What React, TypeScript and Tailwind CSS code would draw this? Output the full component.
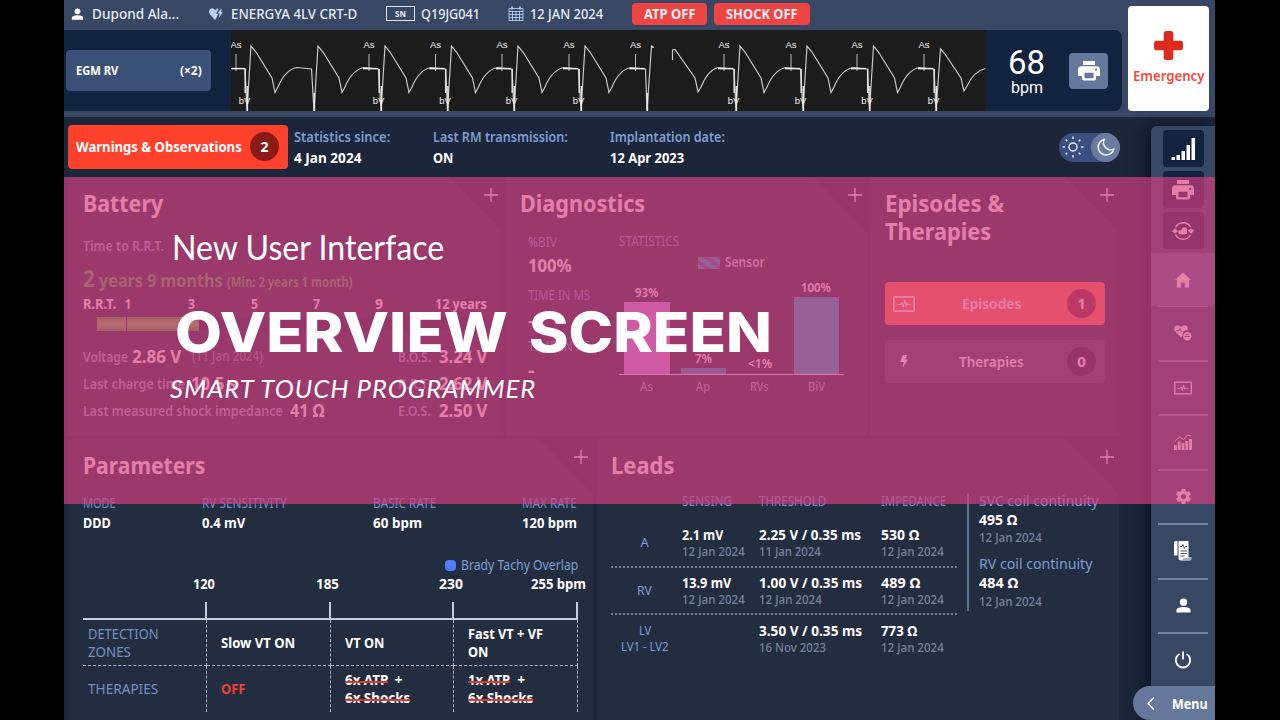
import { useLayoutEffect, useRef, useState, type ReactNode } from 'react';

/** One line of text, condensed or widened to take up exactly `w` pixels. */
function T({ w, c = '', children }: { w: number; c?: string; children: ReactNode }) {
  const ref = useRef<HTMLSpanElement>(null);
  const [scale, setScale] = useState(1);
  useLayoutEffect(() => {
    if (ref.current) setScale(w / ref.current.offsetWidth);
  }, [w, children]);
  return (
    <span className={`flex shrink-0 leading-none ${c}`} style={{ width: w }}>
      <span ref={ref} className="inline-block shrink-0 origin-left whitespace-nowrap" style={{ transform: `scaleX(${scale})` }}>
        {children}
      </span>
    </span>
  );
}

function PersonIcon({ c }: { c: string }) {
  return (
    <svg viewBox="0 0 16 16" className={c} fill="currentColor">
      <circle cx="8" cy="4.4" r="3.9" />
      <path d="M0.5 15.5v-2.2C0.5 10.6 4 9.6 8 9.6s7.5 1 7.5 3.7v2.2z" />
    </svg>
  );
}

function PrinterIcon({ c }: { c: string }) {
  return (
    <svg viewBox="0 0 22 20" className={c} fill="currentColor">
      <path d="M5 0h12v4H5z" />
      <path fillRule="evenodd" d="M3.5 5.2h15A3.5 3.5 0 0 1 22 8.700V15h-4v2.500A2 2 0 0 1 16 19.500H6A2 2 0 0 1 4 17.500V15H0V8.700A3.500 3.500 0 0 1 3.500 5.200zM6.500 11.800v5.400h9v-5.400zM18 7.600a1.100 1.100 0 1 0 0.010 0z" />
    </svg>
  );
}

function MonitorIcon({ c }: { c: string }) {
  return (
    <svg viewBox="0 0 22 16" className={c} fill="none" stroke="currentColor" strokeWidth="1.700">
      <rect x="0.850" y="0.850" width="20.300" height="14.300" rx="1" />
      <path d="M4.500 8.500h3l1.300-1.800 1.400 4.500 1.500-7 1.300 5.500 1-2.200 1 1h2.500" strokeWidth="1.200" />
    </svg>
  );
}

const beats = [247, 314, 381, 447.5, 514, 581];
const lateBeats = [736, 803, 869.5];
const wave = (x: number) =>
  `L${x} 111L${x + 4} 46L${x + 9} 52L${x + 25} 78L${x + 28} 92.500L${x + 31} 87Q${x + 38} 70 ${x + 50} 67.500L${x + 64.5} 69`;
const trace =
  'M231 68.500H245' + beats.map(wave).join('') + 'L647 111L651.500 46L654 47.500' +
  'M672.500 60V50L675 49.500L695 78L698 92L701 87Q708 70 718 67.500L734 69' + lateBeats.map(wave).join('') +
  'L936 111L940.500 49L945 54L961 78L964 91L967 86Q974 71 985.500 68.500';
const senses = [236, 369, 435.5, 502, 569, 635.5, 724, 791, 857, 924];
const paces = [247, 381, 447.5, 514, 581, 736, 803, 869.5, 936];

function Egm() {
  return (
    <svg viewBox="231 30 755 81" className="h-[81px] w-[755px] shrink-0 bg-[#1c1c1c]">
      <path d={trace} fill="none" stroke="#c9c9c9" strokeWidth="1.2" />
      <path d="M314.300 93V111M647.300 93V111" stroke="#e4e4e4" strokeWidth="1.800" />
      {senses.map((x) => (
        <g key={x}>
          <path d={`M${x} 54V71`} stroke="#bbb" strokeWidth="1" />
          <path d={`M${x - 6} 68.600H${x + 9}`} stroke="#eee" strokeWidth="1.500" />
          <text x={x} y="47.500" textAnchor="middle" fill="#f2f2f2" className="font-['Liberation_Sans'] text-[9.5px]">As</text>
        </g>
      ))}
      {paces.map((x) => (
        <g key={x}>
          <path d={`M${x - 1.8} 69V93M${x + 0.4} 86V111`} stroke="#e4e4e4" strokeWidth="1.500" />
          <text x={x - 2.5} y="104" textAnchor="middle" fill="#f2f2f2" className="font-['Liberation_Sans'] text-[9.5px]">bV</text>
        </g>
      ))}
    </svg>
  );
}

function Header() {
  return (
    <header className="flex h-[117px] shrink-0 bg-[#384764]">
      <div className="w-[1058px]">
        <div className="flex h-[30px] items-center pb-[3px] text-[15px] font-medium text-[#e6ebf7]">
          <PersonIcon c="ml-[7px] h-[12px] w-[13px] text-white" />
          <T w={87} c="ml-2">Dupond Ala...</T>
          <svg viewBox="0 0 14 12" className="ml-[30px] h-[12px] w-[14px]" fill="#b9cff5">
            <path d="M6 12L1 6.500C-1.500 3.500 1 0 3.700 0.400 5 0.500 6 1.500 6.300 2.200 7 1 8.300 0.300 9.600 0.500L7.200 5.500l2 0.500L7 11z" />
            <path d="M11 1.500L8.800 5.200l2 0.500-1.300 4.500 4.300-5.700-2-0.500 1.200-2.400z" />
          </svg>
          <T w={126} c="ml-2">ENERGYA 4LV CRT-D</T>
          <span className="ml-[29px] flex h-[15px] w-[29px] items-center justify-center border border-[#dce5f7] text-[8px] font-bold leading-none">SN</span>
          <T w={59} c="ml-[6px]">Q19JG041</T>
          <svg viewBox="0 0 16 16" className="ml-[28px] h-4 w-4" fill="none" stroke="#b9cff5">
            <path d="M1 2.500h14v12H1zM1 5.500h14M1 8.500h14M1 11.500h14M4.500 5.500v9M8 5.500v9M11.500 5.500v9" strokeWidth="0.9" />
            <path d="M4 0.500v3M12 0.500v3" strokeWidth="1.600" />
          </svg>
          <T w={73} c="ml-[6px]">12 JAN 2024</T>
          <span className="ml-[29px] flex h-[22px] w-[75px] items-center justify-center rounded bg-[#ef4542] text-[14.5px] font-bold"><T w={52}>ATP OFF</T></span>
          <span className="ml-[7px] flex h-[22px] w-[96px] items-center justify-center rounded bg-[#ef4542] text-[14.5px] font-bold"><T w={72}>SHOCK OFF</T></span>
        </div>
        <div className="flex h-[81px] items-center rounded-r-lg bg-[#12233f]">
          <div className="ml-[2px] mr-[20px] flex h-[41px] w-[145px] items-center justify-between rounded bg-[#3b5078] pl-[10px] pr-[9px] text-[13px] font-bold text-white">
            <T w={42}>EGM RV</T>
            <T w={22}>(×2)</T>
          </div>
          <Egm />
          <div className="ml-[22px] flex w-[37px] flex-col items-center text-white">
            <span className="flex h-[34px] items-center font-['Roboto'] text-[33px] leading-none"><T w={37}>68</T></span>
            <span className="flex h-[16px] items-center font-['Roboto'] text-[17px] leading-none"><T w={32}>bpm</T></span>
          </div>
          <div className="ml-[24px] flex h-[36px] w-[39px] items-center justify-center rounded bg-[#65779a] text-white">
            <PrinterIcon c="h-[20px] w-[22px]" />
          </div>
        </div>
      </div>
      <div className="ml-[6px] mt-[6px] flex h-[105px] w-[81px] flex-col items-center rounded bg-white">
        <svg viewBox="0 0 29 29" className="mt-[25px] h-[29px] w-[29px]" fill="#dc2a1e">
          <rect x="9.700" width="9.600" height="29" rx="2.500" />
          <rect y="9.700" width="29" height="9.600" rx="2.500" />
        </svg>
        <T w={71} c="mt-[8px] text-[15px] font-semibold text-[#f4473a]">Emergency</T>
      </div>
    </header>
  );
}

function Fact({ label, lw, value, vw, c }: { label: string; lw: number; value: string; vw: number; c: string }) {
  return (
    <div className={`flex flex-col gap-[7px] text-[14px] ${c}`}>
      <T w={lw} c="font-semibold text-[#7f9dd4]">{label}</T>
      <T w={vw} c="font-bold text-white">{value}</T>
    </div>
  );
}

function StatusBar() {
  return (
    <div className="flex h-[60px] shrink-0 items-center">
      <div className="ml-[4px] flex h-[44px] w-[220px] items-center justify-between rounded bg-[#ff402a] pb-px pl-[8px] pr-[9px] text-white">
        <T w={166} c="text-[15px] font-bold">Warnings & Observations</T>
        <span className="flex h-[29px] w-[29px] items-center justify-center rounded-full bg-[#8a1a15] text-[14px] font-bold">2</span>
      </div>
      <Fact label="Statistics since:" lw={96} value="4 Jan 2024" vw={67} c="ml-[6px] w-[139px]" />
      <Fact label="Last RM transmission:" lw={135} value="ON" vw={20} c="w-[177px]" />
      <Fact label="Implantation date:" lw={115} value="12 Apr 2023" vw={74} c="w-[449px]" />
      <div className="flex h-[29px] w-[61px] items-center justify-between rounded-full bg-[#3a4f80]">
        <svg viewBox="0 0 22 22" className="ml-[3px] h-[22px] w-[22px]" fill="none" stroke="#dfe7f7" strokeWidth="1.500">
          <circle cx="11" cy="11" r="4" />
          <path d="M11 0.500v2.500M11 19v2.500M0.500 11H3M19 11h2.500M3.600 3.600l1.700 1.700M16.700 16.700l1.700 1.700M3.600 18.400l1.700-1.700M16.700 5.300l1.700-1.700" />
        </svg>
        <div className="flex h-[29px] w-[29px] items-center justify-center rounded-full bg-[#6a7b9d]">
          <svg viewBox="0 0 18 18" className="h-[18px] w-[18px]" fill="none" stroke="#eef2fb" strokeWidth="1.500" strokeLinejoin="round">
            <path d="M7.500 1.200A8 8 0 1 0 17 10.800 7 7 0 0 1 7.500 1.200z" />
          </svg>
        </div>
      </div>
    </div>
  );
}

function Card({ c, children }: { c: string; children: ReactNode }) {
  return (
    <section className={`relative shrink-0 bg-[#232d40] ${c}`}>
      <div className="absolute right-0 top-0 h-[55px] w-[54px] bg-[#1b2439] [clip-path:polygon(0_0,100%_0,100%_100%)]" />
      <svg viewBox="0 0 14 14" className="absolute right-[5.500px] top-[10.500px] h-[14px] w-[14px]" stroke="#fff" strokeWidth="1.300">
        <path d="M7 0v14M0 7h14" />
      </svg>
      {children}
    </section>
  );
}

const title = 'text-[23px] font-bold text-white';
const label = 'text-[#7891c0]';
const batteryLabel = 'text-[14px] font-semibold text-[#949fc0]';

function Battery() {
  const rows = [
    { name: 'Voltage', nw: 45, v: '2.86 V', vw: 49, date: '(11 Jan 2024)', e: 'B.O.S.', x: '3.24 V', gap: 'ml-1' },
    { name: 'Last charge time', nw: 102, v: '10.5 s', vw: 46, date: '', e: 'R.R.T.', x: '2.62 V', gap: 'ml-[6px]' },
    { name: 'Last measured shock impedance', nw: 200, v: '41 Ω', vw: 35, date: '', e: 'E.O.S.', x: '2.50 V', gap: 'ml-[7px]' },
  ];
  return (
    <Card c="h-[259px] w-[435px] pl-[15px] pr-[16px]">
      <div className="flex h-[53px] items-center"><T w={80} c={title}>Battery</T></div>
      <div className="flex h-[32px] items-center"><T w={81} c={batteryLabel}>Time to R.R.T.</T></div>
      <div className="flex h-[33px] items-baseline pt-[4px] font-bold text-[#4fae4a]">
        <T w={12} c="text-[24px]">2</T>
        <T w={124} c="ml-1 text-[18px]">years 9 months</T>
        <T w={126} c="ml-1 text-[13.5px]">(Min: 2 years 1 month)</T>
      </div>
      <div className="flex h-[18px] items-center text-[14px] font-bold text-white">
        <T w={33}>R.R.T.</T><T w={6} c="ml-[9px]">1</T><T w={7} c="ml-[57px]">3</T><T w={7} c="ml-[56px]">5</T><T w={7} c="ml-[55px]">7</T><T w={8} c="ml-[55px]">9</T><T w={52} c="ml-[52px]">12 years</T>
      </div>
      <div className="ml-[14px] mt-[4px] flex h-[14px] w-[390px] bg-[#1b2439]">
        <div className="w-[30px] border-r border-[#1b2439] bg-gradient-to-b from-[#3fa03c] via-[#7ccb50] to-[#3fa03c]" />
        <div className="w-[72px] bg-gradient-to-b from-[#3fa03c] via-[#7ccb50] to-[#3fa03c]" />
      </div>
      <div className="mt-[12px]">
        {rows.map((r) => (
          <div key={r.name} className="flex h-[27px] items-center">
            <T w={r.nw} c={batteryLabel}>{r.name}</T>
            <T w={r.vw} c={`text-[17px] font-bold text-white ${r.gap}`}>{r.v}</T>
            {r.date && <T w={71} c="ml-[11px] text-[13.5px] font-medium text-[#76849c]">{r.date}</T>}
            <T w={33} c={`ml-auto ${batteryLabel}`}>{r.e}</T>
            <T w={48} c="ml-[8px] text-[17px] font-bold text-white">{r.x}</T>
          </div>
        ))}
      </div>
    </Card>
  );
}

function Diagnostics() {
  const bars = [
    { name: 'As', nw: 13, h: 72, value: '93%', vw: 23, fill: 'bg-[#c691ec]', lift: 'mb-[3px]' },
    { name: 'Ap', nw: 14, h: 6, value: '7%', vw: 17, fill: 'bg-[#2095b0]', lift: 'mb-[3px]' },
    { name: 'RVs', nw: 19, h: 0, value: '<1%', vw: 24, fill: 'bg-[#2095b0]', lift: 'mb-[4px]' },
    { name: 'BiV', nw: 17, h: 77, value: '100%', vw: 30, fill: 'bg-[#1aa6bc]', lift: 'mb-[3px]' },
  ];
  return (
    <Card c="h-[259px] w-[361px] pl-[14px]">
      <div className="flex h-[53px] items-center"><T w={125} c={title}>Diagnostics</T></div>
      <div className="flex pl-[8px]">
        <div className="w-[91px] text-[14px]">
          <div className="flex h-[24px] items-center"><T w={29} c={label}>%BIV</T></div>
          <div className="flex h-[22px] items-center"><T w={44} c="text-[17px] font-bold text-white">100%</T></div>
          <div className="flex h-[37px] items-center"><T w={62} c={label}>TIME IN MS</T></div>
          <div className="flex h-[16px] items-center"><T w={6} c="font-bold text-white">-</T></div>
          <div className="flex h-[34px] items-center"><T w={62} c={label}>TIME IN AF</T></div>
          <div className="flex h-[14px] items-center"><T w={6} c="text-[17px] font-bold text-white">-</T></div>
        </div>
        <div className="w-[225px]">
          <div className="flex h-[24px] items-center"><T w={60} c={`text-[13.5px] ${label}`}>STATISTICS</T></div>
          <div className="flex h-[17px] items-center">
            <div className="ml-[79px] h-[12px] w-[22px] bg-[repeating-linear-gradient(35deg,#1aa6bc_0,#1aa6bc_4px,#3c6191_4px,#3c6191_8px)]" />
            <T w={40} c="ml-[5px] text-[13.5px] font-semibold text-[#c4cfe4]">Sensor</T>
          </div>
          <div className="flex h-[104px] items-end gap-[11px] border-b border-[#dde3f2] pl-[5px]">
            {bars.map((b) => (
              <div key={b.name} className="flex w-[45.500px] flex-col items-center">
                <T w={b.vw} c={`text-[13px] font-semibold text-white ${b.lift}`}>{b.value}</T>
                <div className={`w-full ${b.fill}`} style={{ height: b.h }} />
              </div>
            ))}
          </div>
          <div className="flex h-[25px] items-center gap-[11px] pl-[5px]">
            {bars.map((b) => (
              <div key={b.name} className="flex w-[45.500px] justify-center"><T w={b.nw} c="text-[12.5px] font-medium text-[#94a5c8]">{b.name}</T></div>
            ))}
          </div>
        </div>
      </div>
    </Card>
  );
}

function Episodes() {
  return (
    <Card c="h-[259px] w-[249px] pl-[15px] pr-[14px]">
      <div className="pt-[12px]">
        <div className="flex h-[28px] items-center"><T w={119} c={title}>Episodes &</T></div>
        <div className="flex h-[28px] items-center"><T w={106} c={title}>Therapies</T></div>
      </div>
      <div className="mt-[37px] flex h-[43px] items-center rounded bg-[#ff7546] pl-[8px] pr-[9px] text-[15px] text-white">
        <MonitorIcon c="h-[16px] w-[22px]" />
        <T w={59} c="ml-[47px] font-semibold">Episodes</T>
        <span className="ml-auto flex h-[29px] w-[29px] items-center justify-center rounded-full bg-[#8a2a2c] font-bold">1</span>
      </div>
      <div className="mt-[15px] flex h-[43px] items-center rounded bg-[#384560] pl-[15px] pr-[9px] text-[15px] text-white">
        <svg viewBox="0 0 8 13" className="h-[13px] w-[8px]" fill="currentColor"><path d="M3 0h4L5.400 4.500H8L2.500 13l1.200-6H0z" /></svg>
        <T w={65} c="ml-[51px] font-semibold">Therapies</T>
        <span className="ml-auto flex h-[29px] w-[29px] items-center justify-center rounded-full bg-[#16203a] font-bold">0</span>
      </div>
    </Card>
  );
}

function Parameters() {
  const params = [
    { k: 'MODE', kw: 33, v: 'DDD', vw: 28, c: 'w-[119px]' },
    { k: 'RV SENSITIVITY', kw: 85, v: '0.4 mV', vw: 43, c: 'w-[171px]' },
    { k: 'BASIC RATE', kw: 63, v: '60 bpm', vw: 49, c: 'w-[149px]' },
    { k: 'MAX RATE', kw: 55, v: '120 bpm', vw: 55, c: 'w-[55px]' },
  ];
  const cell = 'flex flex-col justify-center gap-[4px] border-r border-dashed border-[#a9b6d0] pl-[14px]';
  const strike = "relative after:absolute after:inset-x-0 after:top-[8px] after:h-[2px] after:bg-[#e2382e] after:content-['']";
  return (
    <Card c="h-[281px] w-[525px] pl-[15px]">
      <div className="flex h-[53px] items-center pb-px"><T w={122} c={title}>Parameters</T></div>
      <div className="flex h-[44px] pt-[4px] text-[14px]">
        {params.map((p) => (
          <div key={p.k} className={`flex flex-col gap-[6px] ${p.c}`}>
            <T w={p.kw} c={label}>{p.k}</T>
            <T w={p.vw} c="font-bold text-white">{p.v}</T>
          </div>
        ))}
      </div>
      <div className="mt-[20px] flex h-[18px] w-[495px] items-center justify-end">
        <span className="h-[11px] w-[11px] rounded-sm bg-[#527cff]" />
        <T w={117} c="ml-[5px] text-[14px] text-[#7f9dd4]">Brady Tachy Overlap</T>
      </div>
      <div className="flex h-[20px] items-center pb-[2px] text-[14.5px] font-bold text-white">
        <T w={22} c="ml-[110px]">120</T><T w={23} c="ml-[101px]">185</T><T w={24} c="ml-[100px]">230</T><T w={55} c="ml-[68px]">255 bpm</T>
      </div>
      <div className="mt-[8px] grid h-[18px] w-[495px] grid-cols-4 border-b-2 border-[#c3cde4]">
        <i className="border-r-2 border-[#c3cde4]" /><i className="border-r-2 border-[#c3cde4]" /><i className="border-r-2 border-[#c3cde4]" /><i className="border-r-2 border-[#c3cde4]" />
      </div>
      <div className="grid w-[495px] grid-cols-4 grid-rows-[46px_46px] text-[14px] font-bold text-white">
        <div className={`${cell} border-b !pl-[5px] font-normal text-[#7590c4]`}><T w={71}>DETECTION</T><T w={43}>ZONES</T></div>
        <div className={`${cell} border-b`}><T w={74}>Slow VT ON</T></div>
        <div className={`${cell} border-b`}><T w={39}>VT ON</T></div>
        <div className={`${cell} border-b`}><T w={75}>Fast VT + VF</T><T w={20}>ON</T></div>
        <div className={`${cell} !pl-[5px] font-normal text-[#7590c4]`}><T w={70}>THERAPIES</T></div>
        <div className={`${cell} text-[#ee4234]`}><T w={24}>OFF</T></div>
        <div className={cell}><span className="flex gap-[7px]"><T w={43} c={strike}>6x ATP</T><T w={8}>+</T></span><T w={65} c={strike}>6x Shocks</T></div>
        <div className={cell}><span className="flex gap-[7px]"><T w={42} c={strike}>1x ATP</T><T w={8}>+</T></span><T w={65} c={strike}>6x Shocks</T></div>
      </div>
    </Card>
  );
}

function Reading({ v, vw, d, dw = 63 }: { v: string; vw: number; d: string; dw?: number }) {
  return (
    <div className="flex flex-col gap-[3px]">
      <T w={vw} c="text-[14px] font-bold text-white">{v}</T>
      <T w={dw} c="text-[13px] font-medium text-[#76849c]">{d}</T>
    </div>
  );
}

function Leads() {
  const cols = 'grid grid-cols-[71px_77px_122px_76px]';
  const rule = 'border-b-2 border-dotted border-[#71809d]';
  return (
    <Card c="h-[281px] w-[522px] pl-[14px]">
      <div className="flex h-[53px] items-center pb-px"><T w={63} c={title}>Leads</T></div>
      <div className="flex">
        <div className="w-[346px]">
          <div className={`${cols} pt-[3px] text-[13.5px] ${label}`}>
            <span /><T w={50}>SENSING</T><T w={67}>THRESHOLD</T><T w={65}>IMPEDANCE</T>
          </div>
          <div className={`${cols} mt-[9px] h-[50px] items-center pt-[2px] ${rule}`}>
            <span className="flex justify-center pr-[4px]"><T w={8} c="text-[13px] text-[#7f9dd4]">A</T></span>
            <Reading v="2.1 mV" vw={41} d="12 Jan 2024" /><Reading v="2.25 V / 0.35 ms" vw={102} d="11 Jan 2024" dw={62} /><Reading v="530 Ω" vw={38} d="12 Jan 2024" />
          </div>
          <div className={`${cols} h-[47px] items-center pt-px ${rule}`}>
            <span className="flex justify-center pr-[4px]"><T w={15} c="text-[13px] text-[#7f9dd4]">RV</T></span>
            <Reading v="13.9 mV" vw={49} d="12 Jan 2024" /><Reading v="1.00 V / 0.35 ms" vw={103} d="12 Jan 2024" /><Reading v="489 Ω" vw={39} d="12 Jan 2024" />
          </div>
          <div className={`${cols} h-[48px] items-center`}>
            <span className="flex flex-col items-center gap-[3px] pr-[4px] text-[13px] text-[#7f9dd4]"><T w={12}>LV</T><T w={48}>LV1 - LV2</T></span>
            <span /><Reading v="3.50 V / 0.35 ms" vw={103} d="16 Nov 2023" dw={67} /><Reading v="773 Ω" vw={36} d="12 Jan 2024" />
          </div>
        </div>
        <div className="ml-[10px] mt-[2px] flex h-[117px] flex-col border-l-2 border-[#5f7090] pl-[10px]">
          <T w={120} c="-mt-px text-[15px] text-[#7f9dd4]">SVC coil continuity</T>
          <T w={38} c="mt-[5px] text-[14px] font-bold text-white">495 Ω</T>
          <T w={63} c="mt-[4px] text-[13px] font-medium text-[#76849c]">12 Jan 2024</T>
          <T w={113} c="mt-[12px] text-[15px] text-[#7f9dd4]">RV coil continuity</T>
          <T w={39} c="mt-[5px] text-[14px] font-bold text-white">484 Ω</T>
          <T w={63} c="mt-[5px] text-[13px] font-medium text-[#76849c]">12 Jan 2024</T>
        </div>
      </div>
    </Card>
  );
}

function Sidebar() {
  const key = 'flex h-[37px] w-[41px] items-center justify-center rounded bg-[#12233f]';
  const item = 'flex h-[54.500px] w-[50px] items-center justify-center border-b-2 border-[#7585a3] text-white';
  return (
    <nav className="flex h-[594px] w-[64px] flex-col items-center rounded-tl-md bg-[#384764] pt-[4px] text-white shadow-[-6px_0_16px_rgba(5,10,22,0.6)]">
      <div className="flex flex-col gap-[4px]">
        <div className={key}>
          <svg viewBox="0 0 24 22" className="h-[22px] w-[24px]" fill="currentColor">
            <path d="M0.500 19h3.500v3H0.500zM5.500 17H9v5H5.500zM10.500 13H14v9h-3.500zM15.500 7H19v15h-3.500zM20.500 0H24v22h-3.500z" />
          </svg>
        </div>
        <div className={key}><PrinterIcon c="h-[20px] w-[22px]" /></div>
        <div className={key}>
          <svg viewBox="0 0 22 20" className="h-[20px] w-[22px]" fill="none" stroke="currentColor" strokeWidth="1.500">
            <path d="M3.500 6.500A8.500 8.500 0 0 1 18.500 6M18.500 14A8.500 8.500 0 0 1 3.500 13.500" />
            <path d="M0 10.500L3 7l3 3.500-3 2zM22 9.500L19 13l-3-3.500 3-2z" fill="currentColor" stroke="none" />
            <path d="M7 9.700c0.500-0.700 1.500-0.900 2.500-0.700L10.500 7c1-1.200 4-0.900 4.500 1.500v4.300c-2 1-5 0.800-7.500 0.500-1.500-0.300-1.500-2.800-0.500-3.600z" fill="currentColor" stroke="none" />
          </svg>
        </div>
      </div>
      <div className="mt-[4px] flex h-[53px] w-full items-center justify-center bg-[#51658a]">
        <svg viewBox="0 0 16 15" className="h-[16px] w-[16px]" fill="currentColor"><path d="M8 0l8 7.500h-1.800V15h-4.400v-5H6.200v5H1.800V7.500H0z" /></svg>
      </div>
      <div className="h-px w-[50px] bg-[#7585a3]" />
      <div className={item}>
        <svg viewBox="0 0 18 16" className="h-[16px] w-[18px]" fill="currentColor">
          <path d="M7 12.500L1 6.300C-1 3.500 1 0 3.700 0.200 5.500 0.300 6.500 1.500 7 2.500 7.500 1.500 8.500 0.300 10.300 0.200 13 0 14.500 3 13.500 5.200 10.500 4.500 8 7 8.700 10.500z" />
          <circle cx="13.300" cy="11.300" r="4.200" />
          <path d="M2.500 5.500h2.500l1-2 1.500 3.500" fill="none" stroke="#384764" strokeWidth="0.9" />
          <path d="M10.500 11.500h5.500M12 9.500h2.500" stroke="#384764" strokeWidth="0.9" />
        </svg>
      </div>
      <div className={item}><MonitorIcon c="h-[14px] w-[18px]" /></div>
      <div className={item}>
        <svg viewBox="0 0 18 16" className="h-[16px] w-[18px]" fill="currentColor">
          <path d="M0 11h2.800v5H0zM3.800 7.500h2.800V16H3.800zM7.600 9h2.800v7H7.600zM11.400 7h2.800v9h-2.800zM15.200 5H18v11h-2.800z" />
          <path d="M0.500 7.500L5.500 3l4 2.500L13.500 1l3.500 1" fill="none" stroke="currentColor" />
        </svg>
      </div>
      <div className={item}>
        <svg viewBox="0 0 24 24" className="h-[19px] w-[19px]" fill="currentColor">
          <path d="M19.140 12.940c.04-.3.06-.61.06-.94s-.02-.64-.07-.94l2.030-1.580a.49.49 0 0 0 .12-.61l-1.920-3.320a.49.49 0 0 0-.59-.22l-2.390.96a7 7 0 0 0-1.620-.94l-.36-2.540a.48.48 0 0 0-.48-.41h-3.840a.48.48 0 0 0-.47.41l-.36 2.540c-.59.24-1.130.57-1.620.94l-2.390-.96a.48.48 0 0 0-.59.220L2.740 8.870a.48.48 0 0 0 .12.610l2.030 1.580a7.400 7.400 0 0 0 0 1.880l-2.030 1.580a.49.49 0 0 0-.12.610l1.920 3.320c.12.220.37.290.59.220l2.390-.96c.5.380 1.030.7 1.620.94l.36 2.540c.05.24.24.41.48.41h3.840c.24 0 .44-.17.47-.41l.36-2.540a7 7 0 0 0 1.620-.94l2.390.96c.22.080.47 0 .59-.22l1.920-3.320a.48.48 0 0 0-.12-.61zM12 15.300a3.300 3.300 0 1 1 0-6.600 3.300 3.300 0 0 1 0 6.600z" />
        </svg>
      </div>
      <div className={item}>
        <svg viewBox="0 0 18 20" className="h-[20px] w-[18px]" fill="currentColor">
          <path d="M0 1.500Q0 0 2 0h1.500v14.500H0zM4.500 0h10v16.500h3v1q0 2-2 2H7q-2.500 0-2.500-2.500z" />
          <path d="M6 5.500h2l1-2 1.300 4 1-2h1.700M6.500 10h6.500M6.500 12.500h6.500M6.500 15h4M9 18h8" fill="none" stroke="#384764" strokeWidth="0.9" />
        </svg>
      </div>
      <div className={item}><PersonIcon c="h-[15px] w-[15px]" /></div>
      <div className="flex h-[52px] items-center">
        <svg viewBox="0 0 18 18" className="h-[18px] w-[18px]" fill="none" stroke="currentColor" strokeWidth="1.800">
          <path d="M5.500 3A7.200 7.200 0 1 0 12.500 3M9 0.500v8" />
        </svg>
      </div>
    </nav>
  );
}

export default function App() {
  return (
    <div className="flex h-[720px] w-[1280px] justify-center overflow-hidden bg-black pr-[1px] font-['Noto_Sans',sans-serif]">
      <div className="relative flex h-full w-[1151px] flex-col overflow-hidden bg-[#1b263a]">
        <Header />
        <div className="flex h-[603px]">
          <main className="flex w-[1087px] flex-col">
            <StatusBar />
            <div className="flex h-[262px] gap-[3px] pl-[4px]"><Battery /><Diagnostics /><Episodes /></div>
            <div className="flex gap-[4px] pl-[4px]"><Parameters /><Leads /></div>
          </main>
          <div className="pt-[9px]"><Sidebar /></div>
        </div>
        <div className="absolute bottom-0 right-0 flex h-[34px] w-[82px] items-center rounded-l-full bg-[#65789a] pl-[14px] text-white">
          <svg viewBox="0 0 8 14" className="h-[13px] w-[8px]" fill="none" stroke="currentColor" strokeWidth="1.500"><path d="M7 0.500L1 7l6 6.500" /></svg>
          <T w={36} c="ml-[17px] text-[15px] font-bold">Menu</T>
        </div>
        <div className="absolute inset-x-0 top-[177px] flex h-[327px] flex-col bg-[rgba(214,62,130,0.67)] pl-[106px] pt-[53px] font-['Lato'] text-white">
          <T w={272} c="ml-[2px] text-[34px]">New User Interface</T>
          <div className="ml-[5px] mt-[40px] flex gap-[21px] font-['Inter'] text-[55.500px] font-extrabold">
            <T w={333}>OVERVIEW</T>
            <T w={243}>SCREEN</T>
          </div>
          <T w={366} c="mt-[15px] text-[26px] italic tracking-[1px]">SMART TOUCH PROGRAMMER</T>
        </div>
      </div>
    </div>
  );
}
